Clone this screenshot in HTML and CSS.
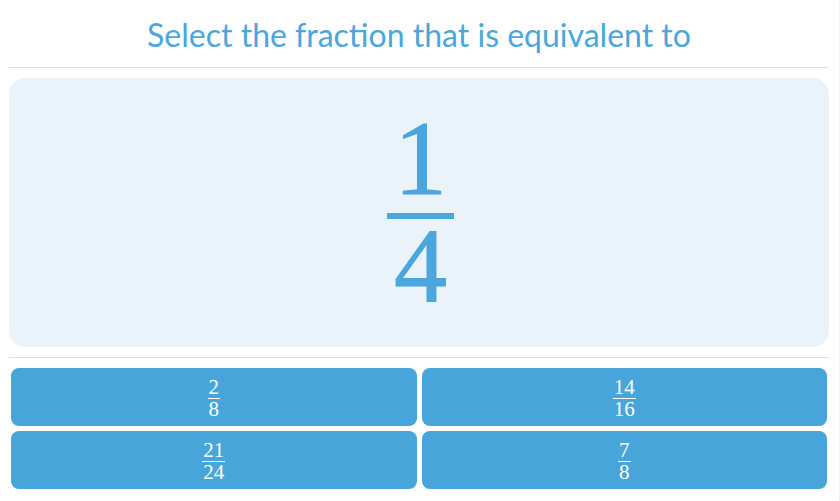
FILE: index.html
```html
<!DOCTYPE html>
<html lang="en">
<head>
    <meta charset="UTF-8">
    <title>Equivalent fractions</title>
    <link rel="stylesheet" href="styles.css">
</head>
<body>
    <div class="quiz">
        <div class="question">Select the fraction that is equivalent to</div>
        <hr class="divider">
        <div class="prompt">
            <span class="frac frac-big">
                <span class="num">1</span>
                <span class="bar"></span>
                <span class="den">4</span>
            </span>
        </div>
        <hr class="divider divider-low">
        <div class="answers">
            <button class="answer">
                <span class="frac"><span class="num">2</span><span class="bar"></span><span class="den">8</span></span>
            </button>
            <button class="answer">
                <span class="frac"><span class="num">14</span><span class="bar"></span><span class="den">16</span></span>
            </button>
            <button class="answer">
                <span class="frac"><span class="num">21</span><span class="bar"></span><span class="den">24</span></span>
            </button>
            <button class="answer">
                <span class="frac"><span class="num">7</span><span class="bar"></span><span class="den">8</span></span>
            </button>
        </div>
    </div>
</body>
</html>
```

FILE: styles.css
```css
html, body {
    margin: 0;
    height: 100%;
}
body {
    background-color: #ffffff;
    border-right: 1px dotted #e6e6e6; /* faint frame edge */
    box-sizing: border-box;
}
.quiz {
    width: 820px;
    margin: 0 0 0 9px;
}
.question {
    height: 67px;
    display: flex;
    align-items: center;
    justify-content: center;
    color: #4aa6db;
    font-family: Lato, "Liberation Sans", sans-serif;
    font-size: 32px;
    padding-top: 2px;
    box-sizing: border-box;
}
.divider {
    margin: 0;
    border: none;
    border-top: 1px solid #dedede;
}
.prompt {
    margin-top: 10px;
    height: 269px;
    background-color: #eaf3f9;
    border-radius: 16px;
    display: flex;
    justify-content: center;
    align-items: center;
}
.divider-low {
    margin-top: 10px;
}
.frac {
    display: inline-flex;
    flex-direction: column;
    align-items: center;
    font-family: "Liberation Serif", "Times New Roman", serif;
    line-height: 1;
}
.frac .bar {
    align-self: stretch;
    height: 1px;
    background-color: currentColor;
}
.frac-big {
    color: #4aa6db;
    font-size: 106px;
    margin-left: 3px;
    -webkit-text-stroke: 1px #4aa6db;
}
.frac-big .num, .frac-big .den {
    padding: 0 7px;
}
.frac-big .num {
    line-height: 106px;
}
.frac-big .bar {
    height: 6px;
    margin-top: 1px;
}
.frac-big .den {
    line-height: 94px;
    margin-bottom: 6px;
}
.answers {
    display: grid;
    grid-template-columns: 1fr 1fr;
    gap: 5px;
    padding: 10px 2px 0;
}
.answer {
    height: 58px;
    border: none;
    border-radius: 8px;
    background-color: #48a5da;
    color: #ffffff;
    font-size: 21px;
    cursor: pointer;
    display: flex;
    justify-content: center;
    align-items: center;
    padding: 2px 0 0;
}
.answer .num, .answer .den {
    line-height: 16px;
    padding: 0 1px;
}
.answer .bar {
    margin: 3px 0 2px;
}
```
